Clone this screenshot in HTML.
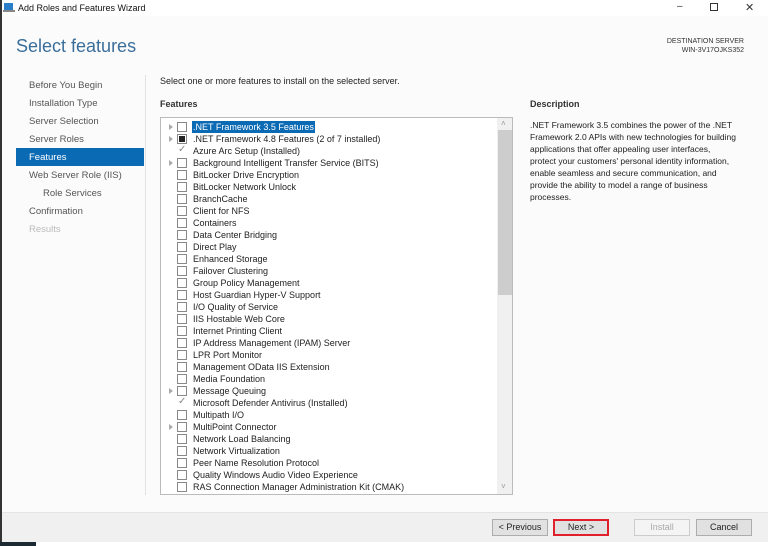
<!DOCTYPE html>
<html><head><style>
*{margin:0;padding:0;box-sizing:border-box}
body{width:768px;height:546px;background:#fff;font-family:"Liberation Sans",sans-serif;font-size:9px;color:#222;position:relative;overflow:hidden}
.a{position:absolute;white-space:nowrap}
.nav{left:29px;color:#555;font-size:9.5px}
.row{position:absolute;left:0;height:12px;width:330px;font-size:9px;line-height:12px}
.cb{position:absolute;left:16px;top:1px;width:10px;height:10px;border:1px solid #888;background:#fff}
.ex{position:absolute;left:8px;top:3px;width:0;height:0;border-left:4px solid #aaa;border-top:3px solid transparent;border-bottom:3px solid transparent}
.tx{position:absolute;left:32px;top:0}
.btn{position:absolute;top:519px;height:17px;border:1px solid #adadad;background:#e1e1e1;font-size:9px;text-align:center;line-height:15px;color:#222}
</style></head><body>
<div class="a" style="left:0;top:0;width:2px;height:546px;background:#333"></div>
<div class="a" style="left:2px;top:0;width:766px;height:512px;background:#fbfbfb"></div>
<div class="a" style="left:2px;top:0;width:766px;height:16px;background:#fff"></div>
<svg class="a" style="left:3px;top:2px" width="12" height="11"><rect x="1" y="1" width="9" height="7" fill="#2a7fc8"/><rect x="0" y="8" width="12" height="2" fill="#888"/></svg>
<div class="a" style="left:18px;top:3px;font-size:9px;color:#111">Add Roles and Features Wizard</div>
<div class="a" style="left:677px;top:1px;font-size:10px;color:#333">–</div>
<div class="a" style="left:710px;top:3px;width:8px;height:8px;border:1px solid #333"></div>
<div class="a" style="left:745px;top:1px;font-size:11px;color:#333">✕</div>
<div class="a" style="left:16px;top:36px;font-size:18px;color:#3a6e9a;font-weight:300">Select features</div>
<div class="a" style="right:24px;top:37px;font-size:7px;color:#333;text-align:right;line-height:9px">DESTINATION SERVER<br>WIN-3V17OJKS352</div>
<div class="a nav" style="top:80px">Before You Begin</div>
<div class="a nav" style="top:98px">Installation Type</div>
<div class="a nav" style="top:116px">Server Selection</div>
<div class="a nav" style="top:134px">Server Roles</div>
<div class="a" style="left:16px;top:148px;width:128px;height:18px;background:#0b6ab4"></div>
<div class="a nav" style="top:152px;color:#fff">Features</div>
<div class="a nav" style="top:170px">Web Server Role (IIS)</div>
<div class="a nav" style="top:188px;left:43px">Role Services</div>
<div class="a nav" style="top:206px">Confirmation</div>
<div class="a nav" style="top:224px;color:#bbb">Results</div>
<div class="a" style="left:145px;top:75px;width:1px;height:420px;background:#e2e2e2"></div>
<div class="a" style="left:160px;top:76px;font-size:9px;color:#222">Select one or more features to install on the selected server.</div>
<div class="a" style="left:160px;top:99px;font-size:9px;font-weight:bold;color:#333">Features</div>
<div class="a" style="left:530px;top:99px;font-size:9px;font-weight:bold;color:#333">Description</div>
<div class="a" style="left:530px;top:119px;font-size:8.5px;line-height:12px;color:#222">.NET Framework 3.5 combines the power of the .NET<br>Framework 2.0 APIs with new technologies for building<br>applications that offer appealing user interfaces,<br>protect your customers' personal identity information,<br>enable seamless and secure communication, and<br>provide the ability to model a range of business<br>processes.</div>
<div class="a" style="left:160px;top:117px;width:353px;height:378px;border:1px solid #bbb;background:#fff;overflow:hidden">
<div class="a" style="left:336px;top:0;width:16px;height:377px;background:#f0f0f0"></div>
<div class="a" style="left:337px;top:12px;width:14px;height:165px;background:#cdcdcd"></div>
<div class="a" style="left:340px;top:1px;font-size:8px;color:#999">˄</div>
<div class="a" style="left:340px;top:364px;font-size:8px;color:#999">˅</div>
<div id="L" style="position:absolute;left:0;top:3px"></div>
</div>
<script>
var it=[["ex",".NET Framework 3.5 Features","sel"],["ex",".NET Framework 4.8 Features (2 of 7 installed)","part"],["","Azure Arc Setup (Installed)","chk"],["ex","Background Intelligent Transfer Service (BITS)"],["","BitLocker Drive Encryption"],["","BitLocker Network Unlock"],["","BranchCache"],["","Client for NFS"],["","Containers"],["","Data Center Bridging"],["","Direct Play"],["","Enhanced Storage"],["","Failover Clustering"],["","Group Policy Management"],["","Host Guardian Hyper-V Support"],["","I/O Quality of Service"],["","IIS Hostable Web Core"],["","Internet Printing Client"],["","IP Address Management (IPAM) Server"],["","LPR Port Monitor"],["","Management OData IIS Extension"],["","Media Foundation"],["ex","Message Queuing"],["","Microsoft Defender Antivirus (Installed)","chk"],["","Multipath I/O"],["ex","MultiPoint Connector"],["","Network Load Balancing"],["","Network Virtualization"],["","Peer Name Resolution Protocol"],["","Quality Windows Audio Video Experience"],["","RAS Connection Manager Administration Kit (CMAK)"]];
var h="";it.forEach(function(r,i){h+='<div class="row" style="top:'+(i*12)+'px">'+(r[0]?'<div class="ex"></div>':'')+(r[2]=="chk"?'<div class="a" style="left:17px;top:-1px;color:#888;font-size:10px">✓</div>':'<div class="cb">'+(r[2]=="part"?'<div style="margin:1px;width:6px;height:6px;background:#222"></div>':'')+'</div>')+'<div class="tx"'+(r[2]=="sel"?' style="background:#0b6ab4;color:#fff;padding:0 1px;left:31px"':'')+'>'+r[1]+'</div></div>'});document.getElementById("L").innerHTML=h;
</script>
<div class="a" style="left:2px;top:512px;width:766px;height:30px;background:#f0f0f0;border-top:1px solid #e4e4e4"></div>
<div class="a" style="left:0;top:542px;width:768px;height:4px;background:#fff"></div>
<div class="a" style="left:0;top:542px;width:36px;height:4px;background:#1c2a33"></div>
<div class="btn" style="left:492px;width:56px">&lt; Previous</div>
<div class="btn" style="left:553px;width:56px;border:2px solid #e0202a;line-height:13px">Next &gt;</div>
<div class="btn" style="left:634px;width:56px;color:#aaa;background:#f4f4f4;border-color:#ccc">Install</div>
<div class="btn" style="left:696px;width:56px">Cancel</div>
</body></html>
